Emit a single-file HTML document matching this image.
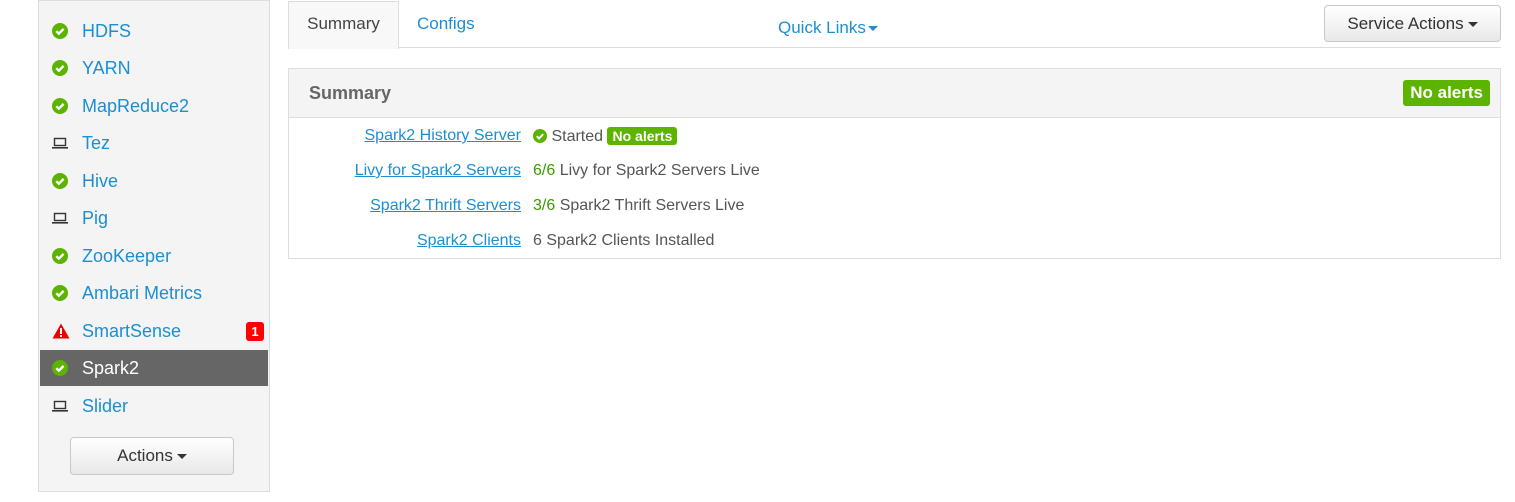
<!DOCTYPE html><html><head><style>
body{margin:0;width:1515px;height:502px;background:#fff;font-family:"Liberation Sans",sans-serif;position:relative;overflow:hidden}
.a{position:absolute}
.side{left:38px;top:0;width:230px;height:490px;background:#f4f4f4;border:1px solid #ddd}
.it{position:absolute;left:1px;width:228px;height:36px;font-size:18px;color:#1b8fd2;line-height:36px}
.it span{position:absolute;left:42px}
.it svg{position:absolute;left:12px;top:10px}
.sel{background:#666;color:#fff}
.btn{border:1px solid #c8c8c8;border-radius:4px;background:linear-gradient(#fff,#e8e8e8);color:#333;text-align:center}
.car{display:inline-block;width:0;height:0;border-left:5px solid transparent;border-right:5px solid transparent;border-top:5px solid #333;vertical-align:middle;margin-left:4px}
.row{position:absolute;left:0;width:1212px;font-size:16px;line-height:20px}
.row a{position:absolute;right:980px;color:#1b8fd2;text-decoration:underline;white-space:nowrap}
.row b{position:absolute;left:244px;font-weight:normal;color:#555;white-space:nowrap}
.g{color:#3a9a00}
.badge{background:#5cb300;color:#fff;font-weight:bold;border-radius:3px}
</style></head><body>
<div class="a side">
<svg width="0" height="0" style="position:absolute"><defs>
<g id="ok"><circle cx="8" cy="8" r="8" fill="#5cb300"/><path d="M4.3 8.2l2.5 2.5 4.8-4.8" stroke="#fff" stroke-width="2.4" fill="none"/></g>
<g id="pc"><rect x="2.5" y="3.5" width="11" height="7" fill="none" stroke="#333" stroke-width="1.4"/><rect x="0" y="12" width="16" height="1.6" fill="#333"/></g>
</defs></svg>
<div class="it" style="top:12px"><svg width="16" height="16"><use href="#ok"/></svg><span>HDFS</span></div>
<div class="it" style="top:49px"><svg width="16" height="16"><use href="#ok"/></svg><span>YARN</span></div>
<div class="it" style="top:87px"><svg width="16" height="16"><use href="#ok"/></svg><span>MapReduce2</span></div>
<div class="it" style="top:124px"><svg width="16" height="16"><use href="#pc"/></svg><span>Tez</span></div>
<div class="it" style="top:162px"><svg width="16" height="16"><use href="#ok"/></svg><span>Hive</span></div>
<div class="it" style="top:199px"><svg width="16" height="16"><use href="#pc"/></svg><span>Pig</span></div>
<div class="it" style="top:237px"><svg width="16" height="16"><use href="#ok"/></svg><span>ZooKeeper</span></div>
<div class="it" style="top:274px"><svg width="16" height="16"><use href="#ok"/></svg><span>Ambari Metrics</span></div>
<div class="it" style="top:312px"><svg width="18" height="16" style="left:12px"><path d="M9 0.5L17.5 15.5H0.5Z" fill="#e00"/><rect x="8" y="5" width="2" height="6" fill="#fff"/><rect x="8" y="12" width="2" height="2" fill="#fff"/></svg><span>SmartSense</span><div class="a" style="left:206px;top:9px;width:18px;height:19px;background:#f00;color:#fff;border-radius:3px;font-size:13px;font-weight:bold;line-height:19px;text-align:center">1</div></div>
<div class="it sel" style="top:349px"><svg width="16" height="16"><use href="#ok"/></svg><span>Spark2</span></div>
<div class="it" style="top:387px"><svg width="16" height="16"><use href="#pc"/></svg><span>Slider</span></div>
<div class="a btn" style="left:31px;top:436px;width:162px;height:36px;line-height:36px;font-size:17px">Actions<span class="car"></span></div>
</div>
<div class="a" style="left:288px;top:47px;width:1213px;height:1px;background:#ddd"></div>
<div class="a" style="left:288px;top:1px;width:109px;height:47px;border:1px solid #ddd;border-bottom:none;background:#f8f8f8;font-size:17px;color:#444;line-height:44px;text-align:center">Summary</div>
<div class="a" style="left:417px;top:14px;font-size:17px;color:#1b8fd2">Configs</div>
<div class="a" style="left:778px;top:18px;font-size:17px;color:#1b8fd2">Quick Links<span class="car" style="border-top-color:#1b8fd2;margin-left:2px"></span></div>
<div class="a btn" style="left:1324px;top:5px;width:175px;height:35px;line-height:35px;font-size:17px">Service Actions<span class="car"></span></div>
<div class="a" style="left:288px;top:68px;width:1211px;height:189px;border:1px solid #ddd">
<div style="height:48px;background:#f4f4f4;border-bottom:1px solid #ddd;position:relative">
<div class="a" style="left:20px;top:14px;font-size:18px;font-weight:bold;color:#666">Summary</div>
<div class="a badge" style="right:10px;top:11px;height:26px;line-height:26px;padding:0 7px;font-size:17px">No alerts</div>
</div>
<div class="row" style="top:57px"><a>Spark2 History Server</a><b><svg width="14" height="14" style="vertical-align:-2px"><circle cx="7" cy="7" r="7" fill="#5cb300"/><path d="M3.8 7.2l2.2 2.2 4.2-4.2" stroke="#fff" stroke-width="2" fill="none"/></svg> Started <span class="badge" style="font-size:14px;padding:1px 5px">No alerts</span></b></div>
<div class="row" style="top:92px"><a>Livy for Spark2 Servers</a><b><span class="g">6/6</span> Livy for Spark2 Servers Live</b></div>
<div class="row" style="top:127px"><a>Spark2 Thrift Servers</a><b><span class="g">3/6</span> Spark2 Thrift Servers Live</b></div>
<div class="row" style="top:162px"><a>Spark2 Clients</a><b>6 Spark2 Clients Installed</b></div>
</div>
</body></html>
